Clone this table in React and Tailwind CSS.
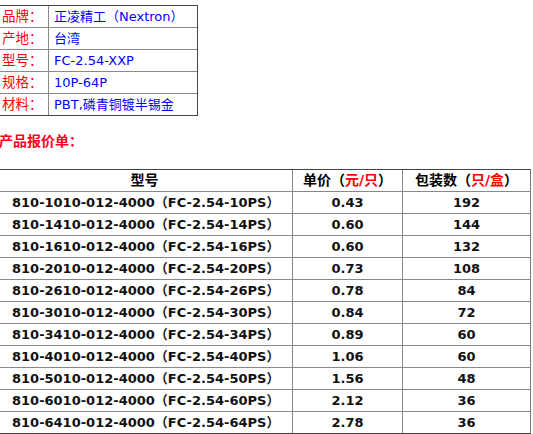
import React from "react";

const info = [
  ["品牌：", "正凌精工（Nextron）"],
  ["产地：", "台湾"],
  ["型号：", "FC-2.54-XXP"],
  ["规格：", "10P-64P"],
  ["材料：", "PBT,磷青铜镀半锡金"],
];

const rows = [
  ["810-1010-012-4000", "FC-2.54-10PS", "0.43", "192"],
  ["810-1410-012-4000", "FC-2.54-14PS", "0.60", "144"],
  ["810-1610-012-4000", "FC-2.54-16PS", "0.60", "132"],
  ["810-2010-012-4000", "FC-2.54-20PS", "0.73", "108"],
  ["810-2610-012-4000", "FC-2.54-26PS", "0.78", "84"],
  ["810-3010-012-4000", "FC-2.54-30PS", "0.84", "72"],
  ["810-3410-012-4000", "FC-2.54-34PS", "0.89", "60"],
  ["810-4010-012-4000", "FC-2.54-40PS", "1.06", "60"],
  ["810-5010-012-4000", "FC-2.54-50PS", "1.56", "48"],
  ["810-6010-012-4000", "FC-2.54-60PS", "2.12", "36"],
  ["810-6410-012-4000", "FC-2.54-64PS", "2.78", "36"],
];

const font = "font-['DejaVu_Sans','Noto_Sans_CJK_SC',sans-serif]";

export default function App() {
  return (
    <div className={`w-[533px] h-[434px] overflow-hidden bg-white ${font}`}>
      <div className="pt-[5px]">
        <div className="w-[198px] border border-[#444] border-l-0">
          {info.map(([k, v], i) => (
            <div
              key={i}
              className={`flex ${i > 0 ? "h-[22px] border-t border-[#888]" : "h-[21px]"}`}
            >
              <div className="w-[49px] border-r border-[#888] pl-[2px] text-[13.5px] leading-[21px] text-[#ff0000]">
                {k}
              </div>
              <div className="flex-1 pl-[5px] text-[13px] leading-[21px] text-[#0000ff] whitespace-nowrap">
                {v}
              </div>
            </div>
          ))}
        </div>
      </div>
      <div className="mt-[16px] ml-[-1px] h-[18px] text-[14px] leading-[18px] font-bold text-[#ff0022]">
        产品报价单：
      </div>
      <div className="mt-[19px] ml-[-3px] w-[534px] border-t border-b border-[#444] border-r-[#777] border-r">
        <div className="flex h-[21px] text-[14px] font-bold leading-[21px] text-[#000]">
          <div className="w-[296px] border-r border-[#888] text-center">型号</div>
          <div className="w-[110px] border-r border-[#888] text-center whitespace-nowrap">
            单价（<span className="text-[#ff0000]">元/只</span>）
          </div>
          <div className="flex-1 text-center whitespace-nowrap">
            包装数（<span className="text-[#ff0000]">只/盒</span>）
          </div>
        </div>
        {rows.map((r, i) => (
          <div
            key={i}
            className="flex h-[22px] border-t border-[#888] text-[13px] font-bold leading-[21px] text-[#111]"
          >
            <div className="w-[296px] border-r border-[#888] pl-[15px] whitespace-nowrap">
              {r[0]}（{r[1]}）
            </div>
            <div className="w-[110px] border-r border-[#888] text-center">{r[2]}</div>
            <div className="flex-1 text-center">{r[3]}</div>
          </div>
        ))}
      </div>
    </div>
  );
}
